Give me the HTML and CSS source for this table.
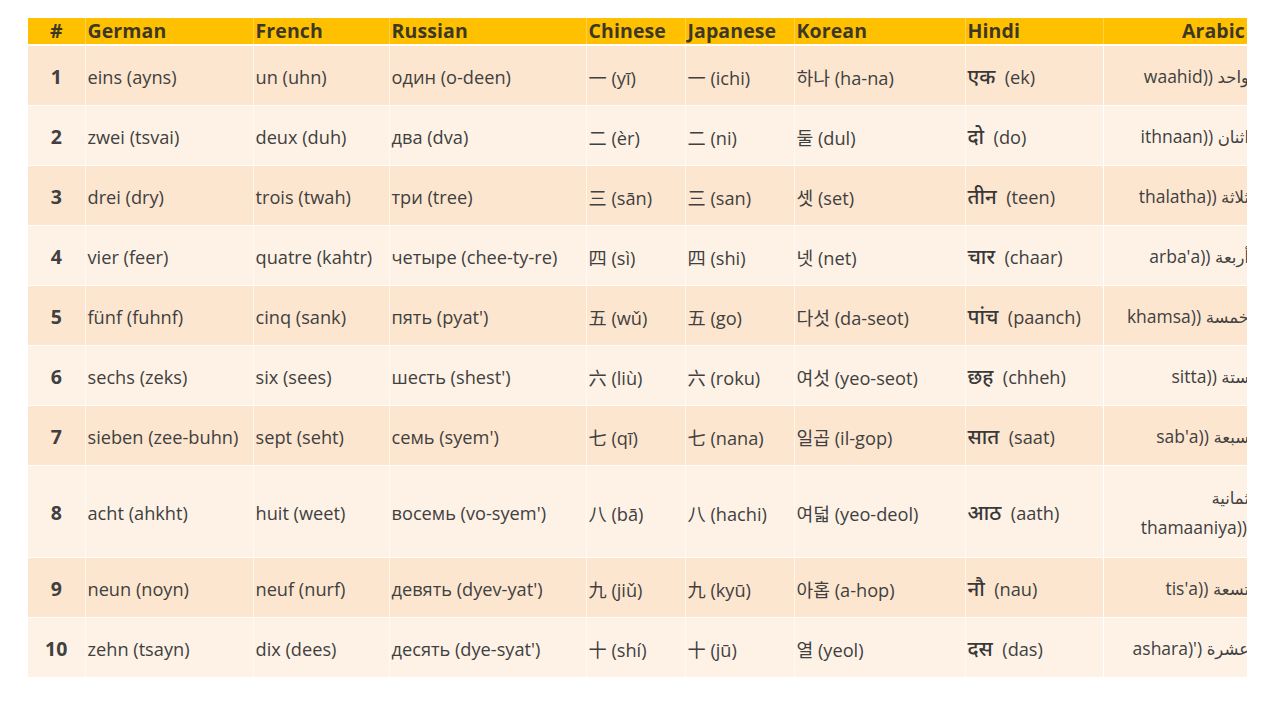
FILE: index.html
```html
<!DOCTYPE html>
<html lang="en">
<head>
<meta charset="utf-8">
<title>Numbers 1-10</title>
<link rel="stylesheet" href="styles.css">
</head>
<body>
<table class="num-table">
  <colgroup>
    <col class="c-num"><col class="c-de"><col class="c-fr"><col class="c-ru"><col class="c-zh"><col class="c-ja"><col class="c-ko"><col class="c-hi"><col class="c-ar">
  </colgroup>
  <thead>
    <tr class="head">
      <th class="num">#</th><th>German</th><th>French</th><th>Russian</th><th>Chinese</th><th>Japanese</th><th>Korean</th><th>Hindi</th><th class="ar">Arabic</th>
    </tr>
  </thead>
  <tbody>
    <tr class="odd"><td class="num">1</td><td>eins (ayns)</td><td>un (uhn)</td><td>один (o-deen)</td><td class="cjk">一 (yī)</td><td class="cjk">一 (ichi)</td><td class="ko">하나 (ha-na)</td><td class="hi"><span class="dev">एक</span>&nbsp; (ek)</td><td class="ar"><div class="ar-in">waahid)) <span class="arw">واحد</span></div></td></tr>
    <tr class="even"><td class="num">2</td><td>zwei (tsvai)</td><td>deux (duh)</td><td>два (dva)</td><td class="cjk">二 (èr)</td><td class="cjk">二 (ni)</td><td class="ko">둘 (dul)</td><td class="hi"><span class="dev">दो</span>&nbsp; (do)</td><td class="ar"><div class="ar-in">ithnaan)) <span class="arw">اثنان</span></div></td></tr>
    <tr class="odd"><td class="num">3</td><td>drei (dry)</td><td>trois (twah)</td><td>три (tree)</td><td class="cjk">三 (sān)</td><td class="cjk">三 (san)</td><td class="ko">셋 (set)</td><td class="hi"><span class="dev">तीन</span>&nbsp; (teen)</td><td class="ar"><div class="ar-in">thalatha)) <span class="arw">ثلاثة</span></div></td></tr>
    <tr class="even"><td class="num">4</td><td>vier (feer)</td><td>quatre (kahtr)</td><td>четыре (chee-ty-re)</td><td class="cjk">四 (sì)</td><td class="cjk">四 (shi)</td><td class="ko">넷 (net)</td><td class="hi"><span class="dev">चार</span>&nbsp; (chaar)</td><td class="ar"><div class="ar-in">arba'a)) <span class="arw">أربعة</span></div></td></tr>
    <tr class="odd"><td class="num">5</td><td>fünf (fuhnf)</td><td>cinq (sank)</td><td>пять (pyat')</td><td class="cjk">五 (wǔ)</td><td class="cjk">五 (go)</td><td class="ko">다섯 (da-seot)</td><td class="hi"><span class="dev">पांच</span>&nbsp; (paanch)</td><td class="ar"><div class="ar-in">khamsa)) <span class="arw">خمسة</span></div></td></tr>
    <tr class="even"><td class="num">6</td><td>sechs (zeks)</td><td>six (sees)</td><td>шесть (shest')</td><td class="cjk">六 (liù)</td><td class="cjk">六 (roku)</td><td class="ko">여섯 (yeo-seot)</td><td class="hi"><span class="dev">छह</span>&nbsp; (chheh)</td><td class="ar"><div class="ar-in">sitta)) <span class="arw">ستة</span></div></td></tr>
    <tr class="odd"><td class="num">7</td><td>sieben (zee-buhn)</td><td>sept (seht)</td><td>семь (syem')</td><td class="cjk">七 (qī)</td><td class="cjk">七 (nana)</td><td class="ko">일곱 (il-gop)</td><td class="hi"><span class="dev">सात</span>&nbsp; (saat)</td><td class="ar"><div class="ar-in">sab'a)) <span class="arw">سبعة</span></div></td></tr>
    <tr class="even tall"><td class="num">8</td><td>acht (ahkht)</td><td>huit (weet)</td><td>восемь (vo-syem')</td><td class="cjk">八 (bā)</td><td class="cjk">八 (hachi)</td><td class="ko">여덟 (yeo-deol)</td><td class="hi"><span class="dev">आठ</span>&nbsp; (aath)</td><td class="ar"><div class="ar-in"><span class="arw">ثمانية</span><br><span class="ar-lat">thamaaniya))</span></div></td></tr>
    <tr class="odd"><td class="num">9</td><td>neun (noyn)</td><td>neuf (nurf)</td><td>девять (dyev-yat')</td><td class="cjk">九 (jiǔ)</td><td class="cjk">九 (kyū)</td><td class="ko">아홉 (a-hop)</td><td class="hi"><span class="dev">नौ</span>&nbsp; (nau)</td><td class="ar"><div class="ar-in">tis'a)) <span class="arw">تسعة</span></div></td></tr>
    <tr class="even"><td class="num">10</td><td>zehn (tsayn)</td><td>dix (dees)</td><td>десять (dye-syat')</td><td class="cjk">十 (shí)</td><td class="cjk">十 (jū)</td><td class="ko">열 (yeol)</td><td class="hi"><span class="dev">दस</span>&nbsp; (das)</td><td class="ar"><div class="ar-in">ashara)') <span class="arw">عشرة</span></div></td></tr>
  </tbody>
</table>
</body>
</html>
```

FILE: styles.css
```css
html, body {
  margin: 0;
  padding: 0;
  background: #ffffff;
}
body {
  padding: 18px 0 0 28px;
  font-family: "Open Sans", "Noto Sans", "Liberation Sans", sans-serif;
  color: #404040;
}
.num-table {
  border-collapse: collapse;
  table-layout: fixed;
  width: 1219px;
}
.c-num { width: 57px; }
.c-de { width: 168px; }
.c-fr { width: 136px; }
.c-ru { width: 197px; }
.c-zh { width: 99px; }
.c-ja { width: 109px; }
.c-ko { width: 171px; }
.c-hi { width: 138px; }
.c-ar { width: 144px; }

.head th {
  background: #ffc000;
  height: 26px;
  padding: 0 2px;
  text-align: left;
  font-size: 19.5px;
  font-weight: 700;
  color: #3d3826;
  border-right: 1px solid #ffd24d;
  border-bottom: 2px solid #ffffff;
  line-height: 26px;
  white-space: nowrap;
  letter-spacing: 0.1px;
}
.head th.num { text-align: center; }
.head th.ar { text-align: right; border-right: none; }

td {
  height: 57px;
  padding: 2px 2px 0;
  font-size: 18.2px;
  white-space: nowrap;
  vertical-align: middle;
  border-right: 1px solid rgba(255, 255, 255, 0.6);
  border-bottom: 1px solid rgba(255, 255, 255, 0.9);
}
tr.tall td { height: 89px; }
tr.odd td { background: #fde6cf; }
tr.even td { background: #fef2e6; }

td.num {
  text-align: center;
  font-weight: 700;
  font-size: 19.5px;
}
td.cjk {
  font-family: "Open Sans", "Noto Sans CJK SC", sans-serif;
}
td.ko {
  font-family: "Open Sans", "Noto Sans CJK KR", sans-serif;
}
.dev {
  font-family: "Noto Sans Devanagari", "Noto Sans", "DejaVu Sans", sans-serif;
  font-size: 20.5px;
  font-weight: 500;
  color: #383838;
  line-height: 0;
}
td.ar {
  border-right: none;
  padding: 2px 0 0;
  overflow: hidden;
}
.ar-in {
  text-align: right;
  margin-right: -2px;
  font-size: 17.5px;
  line-height: 29px;
}
.arw {
  font-family: "DejaVu Sans", "Noto Sans", sans-serif;
  font-size: 16.5px;
}
.ar-lat {
  margin-right: 2px;
}
```
